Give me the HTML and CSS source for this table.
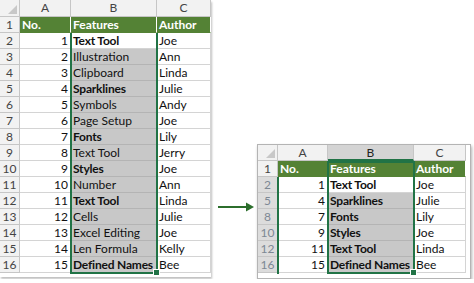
FILE: index.html
```html
<!DOCTYPE html>
<html lang="en">

<head>
    <meta charset="UTF-8">
    <title>Filter Bold Cells</title>
    <link rel="stylesheet" href="styles.css">
</head>

<body>
    <div class="page">
        <!-- before: all rows -->
        <div class="sheet sheet-left">
            <div class="grid grid-left">
                <div class="corner"><span class="tri"></span></div>
                <div class="ch">A</div>
                <div class="ch">B</div>
                <div class="ch">C</div>

                <div class="rh">1</div><div class="hd">No.</div><div class="hd">Features</div><div class="hd">Author</div>
                <div class="rh">2</div><div class="num">1</div><div class="b">Text Tool</div><div>Joe</div>
                <div class="rh">3</div><div class="num">2</div><div class="g">Illustration</div><div>Ann</div>
                <div class="rh">4</div><div class="num">3</div><div class="g">Clipboard</div><div>Linda</div>
                <div class="rh">5</div><div class="num">4</div><div class="g b">Sparklines</div><div>Julie</div>
                <div class="rh">6</div><div class="num">5</div><div class="g">Symbols</div><div>Andy</div>
                <div class="rh">7</div><div class="num">6</div><div class="g">Page Setup</div><div>Joe</div>
                <div class="rh">8</div><div class="num">7</div><div class="g b">Fonts</div><div>Lily</div>
                <div class="rh">9</div><div class="num">8</div><div class="g">Text Tool</div><div>Jerry</div>
                <div class="rh">10</div><div class="num">9</div><div class="g b">Styles</div><div>Joe</div>
                <div class="rh">11</div><div class="num">10</div><div class="g">Number</div><div>Ann</div>
                <div class="rh">12</div><div class="num">11</div><div class="g b">Text Tool</div><div>Linda</div>
                <div class="rh">13</div><div class="num">12</div><div class="g">Cells</div><div>Julie</div>
                <div class="rh">14</div><div class="num">13</div><div class="g">Excel Editing</div><div>Joe</div>
                <div class="rh">15</div><div class="num">14</div><div class="g">Len Formula</div><div>Kelly</div>
                <div class="rh">16</div><div class="num">15</div><div class="g b">Defined Names</div><div>Bee</div>
            </div>
            <div class="selection sel-left"><span class="handle"></span></div>
        </div>

        <div class="arrow">
            <svg width="36" height="10" viewBox="0 0 36 10">
                <line x1="0" y1="5" x2="29" y2="5" stroke="#2c6e2c" stroke-width="2" />
                <polygon points="28,0.5 36,5 28,9.5" fill="#2c6e2c" />
            </svg>
        </div>

        <!-- after: bold rows only -->
        <div class="sheet sheet-right">
            <div class="grid grid-right">
                <div class="corner"><span class="tri"></span></div>
                <div class="ch">A</div>
                <div class="ch ch-on">B</div>
                <div class="ch">C</div>

                <div class="rh">1</div><div class="hd">No.</div><div class="hd">Features</div><div class="hd">Author</div>
                <div class="rh rh-f">2</div><div class="num">1</div><div class="b">Text Tool</div><div>Joe</div>
                <div class="rh rh-f">5</div><div class="num">4</div><div class="g b">Sparklines</div><div>Julie</div>
                <div class="rh rh-f">8</div><div class="num">7</div><div class="g b">Fonts</div><div>Lily</div>
                <div class="rh rh-f">10</div><div class="num">9</div><div class="g b">Styles</div><div>Joe</div>
                <div class="rh rh-f">12</div><div class="num">11</div><div class="g b">Text Tool</div><div>Linda</div>
                <div class="rh rh-f">16</div><div class="num">15</div><div class="g b">Defined Names</div><div>Bee</div>
            </div>
            <div class="edge-a"></div>
            <div class="selection sel-right"><span class="handle"></span></div>
        </div>
    </div>
</body>

</html>
```

FILE: styles.css
```css
/* styles.css */

body {
    margin: 0;
    background: #fff;
    font-family: Lato, "Open Sans", sans-serif;
    font-size: 12px;
    color: #111;
}

.page {
    display: flex;
    align-items: flex-start;
}

.sheet {
    position: relative;
    background: #fff;
}

.sheet-left {
    padding-bottom: 4px;
    box-shadow: 1px 2px 2px rgba(0, 0, 0, 0.25);
}

.sheet-right {
    margin-top: 144px;
    margin-left: 3px;
    padding: 0 4px 5px 0;
    border: 1px solid #b4b4b4;
    box-shadow: 1px 2px 3px rgba(0, 0, 0, 0.3);
}

.grid {
    display: grid;
}

.grid-left {
    grid-template-columns: 20px 51px 86px 54px;
    grid-template-rows: 17px repeat(16, 16px);
}

.grid-right {
    grid-template-columns: 20px 50px 86px 52px;
    grid-template-rows: 16px repeat(7, 16px);
}

.grid > div {
    box-sizing: border-box;
    border-right: 1px solid #d4d4d4;
    border-bottom: 1px solid #d4d4d4;
    padding: 0 2px;
    line-height: 15px;
    white-space: nowrap;
    overflow: hidden;
}

.grid > .corner,
.grid > .ch,
.grid > .rh {
    background: #f2f2f2;
    border-color: #c6c6c6;
    color: #444;
    text-align: center;
    padding: 0;
}

.corner {
    position: relative;
}

.tri {
    position: absolute;
    right: 2px;
    bottom: 2px;
    width: 0;
    height: 0;
    border-left: 9px solid transparent;
    border-bottom: 9px solid #c8c8c8;
}

.grid > .ch-on {
    background: #d4d4d4;
    border-bottom: 2px solid #217346;
    color: #222;
}

.grid > .rh-f {
    background: #dcdcdc;
    color: #7d8894;
}

.grid > .hd {
    background: #548235;
    border-color: #548235;
    border-right-color: #fff;
    color: #fff;
    font-weight: bold;
}

.num {
    text-align: right;
}

.b {
    font-weight: bold;
    letter-spacing: -0.2px;
}

.grid > .g {
    background: #c8c8c8;
    border-color: #b4b4b4;
}

.selection {
    position: absolute;
    box-sizing: border-box;
    border: 2px solid #217346;
    border-top: 0;
}

.sel-left {
    left: 70px;
    top: 33px;
    width: 88px;
    height: 241px;
}

.sel-right {
    left: 69px;
    top: 16px;
    width: 88px;
    height: 113px;
    border-top: 2px solid #217346;
}

.edge-a {
    position: absolute;
    left: 19px;
    top: 32px;
    width: 2px;
    height: 97px;
    background: #217346;
}

.handle {
    position: absolute;
    right: -4px;
    bottom: -4px;
    width: 5px;
    height: 5px;
    background: #217346;
    border: 1px solid #fff;
}

.arrow {
    margin: 202px 0 0 7px;
    line-height: 0;
}
```
